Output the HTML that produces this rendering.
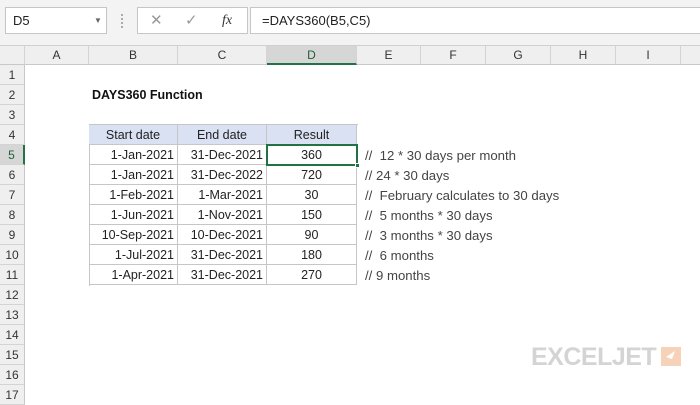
<!DOCTYPE html><html><head><style>
body{margin:0;width:700px;height:400px;overflow:hidden;background:#fff;font-family:"Liberation Sans",sans-serif;position:relative}
div{position:absolute;box-sizing:border-box}
.ch{top:46px;height:19px;background:#efefef;border-right:1px solid #d4d4d4;border-bottom:1px solid #c8c8c8;text-align:center;font-size:12px;line-height:18px;color:#333}
.rh{left:0;width:25px;height:20px;background:#efefef;border-bottom:1px solid #d4d4d4;border-right:1px solid #c8c8c8;text-align:center;font-size:12px;line-height:20px;color:#333}
.c{height:20px;font-size:12.5px;line-height:20px;color:#222;border-right:1px solid #c6c6c6;border-bottom:1px solid #c6c6c6;white-space:nowrap;padding:0 3px}
.n{font-size:13.2px;line-height:20px;color:#444;white-space:nowrap;left:365px}
</style></head><body>
<div style="left:0;top:0;width:700px;height:46px;background:#f3f3f3;border-bottom:1px solid #d0d0d0"></div>
<div style="left:5px;top:7px;width:102px;height:27px;background:#fff;border:1px solid #c6c6c6;font-size:13px;line-height:25px;padding-left:7px;color:#222">D5<span style="position:absolute;left:88px;top:0;font-size:8px;color:#666">▼</span></div>
<div style="left:121px;top:14px;width:2px;height:14px;border-left:2px dotted #aaa"></div>
<div style="left:137px;top:7px;width:111px;height:27px;background:#fff;border:1px solid #c6c6c6;color:#999;font-size:15px;line-height:25px"><span style="position:absolute;left:12px">✕</span><span style="position:absolute;left:47px">✓</span><span style="position:absolute;left:84px;font-family:'Liberation Serif',serif;font-style:italic;color:#333;font-size:14px">fx</span></div>
<div style="left:250px;top:7px;width:460px;height:27px;background:#fff;border:1px solid #c6c6c6;font-size:13px;line-height:25px;padding-left:11px;color:#222">=DAYS360(B5,C5)</div>
<div class="ch" style="left:0;width:25px"></div>
<div class="ch" style="left:25px;width:64px">A</div>
<div class="ch" style="left:89px;width:89px">B</div>
<div class="ch" style="left:178px;width:89px">C</div>
<div class="ch" style="left:267px;width:90px;background:#d6d6d6;border-bottom:2px solid #217346;color:#1f5f3a">D</div>
<div class="ch" style="left:357px;width:64px">E</div>
<div class="ch" style="left:421px;width:65px">F</div>
<div class="ch" style="left:486px;width:65px">G</div>
<div class="ch" style="left:551px;width:65px">H</div>
<div class="ch" style="left:616px;width:65px">I</div>
<div class="ch" style="left:681px;width:30px"></div>
<div class="rh" style="top:65px">1</div><div class="rh" style="top:85px">2</div><div class="rh" style="top:105px">3</div><div class="rh" style="top:125px">4</div>
<div class="rh" style="top:145px;background:#d6d6d6;border-right:2px solid #217346;color:#1f5f3a">5</div>
<div class="rh" style="top:165px">6</div><div class="rh" style="top:185px">7</div><div class="rh" style="top:205px">8</div><div class="rh" style="top:225px">9</div><div class="rh" style="top:245px">10</div><div class="rh" style="top:265px">11</div><div class="rh" style="top:285px">12</div><div class="rh" style="top:305px">13</div><div class="rh" style="top:325px">14</div><div class="rh" style="top:345px">15</div><div class="rh" style="top:365px">16</div><div class="rh" style="top:385px">17</div>
<div style="left:92px;top:85px;font-size:12.5px;font-weight:bold;line-height:20px;color:#111">DAYS360 Function</div>
<div style="left:89px;top:124px;width:269px;height:162px;border-left:1px solid #c6c6c6;border-top:1px solid #c6c6c6"></div>
<div class="c" style="left:89px;top:125px;width:89px;background:#d9e1f2;text-align:center">Start date</div>
<div class="c" style="left:178px;top:125px;width:89px;background:#d9e1f2;text-align:center">End date</div>
<div class="c" style="left:267px;top:125px;width:90px;background:#d9e1f2;text-align:center">Result</div>
<div class="c" style="left:89px;top:145px;width:89px;text-align:right">1-Jan-2021</div><div class="c" style="left:178px;top:145px;width:89px;text-align:right">31-Dec-2021</div><div class="c" style="left:267px;top:145px;width:90px;text-align:center">360</div>
<div class="c" style="left:89px;top:165px;width:89px;text-align:right">1-Jan-2021</div><div class="c" style="left:178px;top:165px;width:89px;text-align:right">31-Dec-2022</div><div class="c" style="left:267px;top:165px;width:90px;text-align:center">720</div>
<div class="c" style="left:89px;top:185px;width:89px;text-align:right">1-Feb-2021</div><div class="c" style="left:178px;top:185px;width:89px;text-align:right">1-Mar-2021</div><div class="c" style="left:267px;top:185px;width:90px;text-align:center">30</div>
<div class="c" style="left:89px;top:205px;width:89px;text-align:right">1-Jun-2021</div><div class="c" style="left:178px;top:205px;width:89px;text-align:right">1-Nov-2021</div><div class="c" style="left:267px;top:205px;width:90px;text-align:center">150</div>
<div class="c" style="left:89px;top:225px;width:89px;text-align:right">10-Sep-2021</div><div class="c" style="left:178px;top:225px;width:89px;text-align:right">10-Dec-2021</div><div class="c" style="left:267px;top:225px;width:90px;text-align:center">90</div>
<div class="c" style="left:89px;top:245px;width:89px;text-align:right">1-Jul-2021</div><div class="c" style="left:178px;top:245px;width:89px;text-align:right">31-Dec-2021</div><div class="c" style="left:267px;top:245px;width:90px;text-align:center">180</div>
<div class="c" style="left:89px;top:265px;width:89px;text-align:right">1-Apr-2021</div><div class="c" style="left:178px;top:265px;width:89px;text-align:right">31-Dec-2021</div><div class="c" style="left:267px;top:265px;width:90px;text-align:center">270</div>
<div style="left:266px;top:144px;width:92px;height:22px;border:2px solid #217346"></div>
<div style="left:355px;top:163px;width:5px;height:5px;background:#217346;border:1px solid #fff"></div>
<div class="n" style="top:146px">//&nbsp; 12 * 30 days per month</div>
<div class="n" style="top:166px">// 24 * 30 days</div>
<div class="n" style="top:186px">//&nbsp; February calculates to 30 days</div>
<div class="n" style="top:206px">//&nbsp; 5 months * 30 days</div>
<div class="n" style="top:226px">//&nbsp; 3 months * 30 days</div>
<div class="n" style="top:246px">//&nbsp; 6 months</div>
<div class="n" style="top:266px">// 9 months</div>
<div style="left:531px;top:342px;font-size:25px;font-weight:bold;color:#d4d4d4;letter-spacing:-0.5px;line-height:30px">EXCELJET</div>
<div style="left:661px;top:347px;width:20px;height:19px;background:#f6d3b8"><svg width="20" height="19"><path d="M14 4 L5 10 L11 12 Z" fill="#fff"/></svg></div>
</body></html>
